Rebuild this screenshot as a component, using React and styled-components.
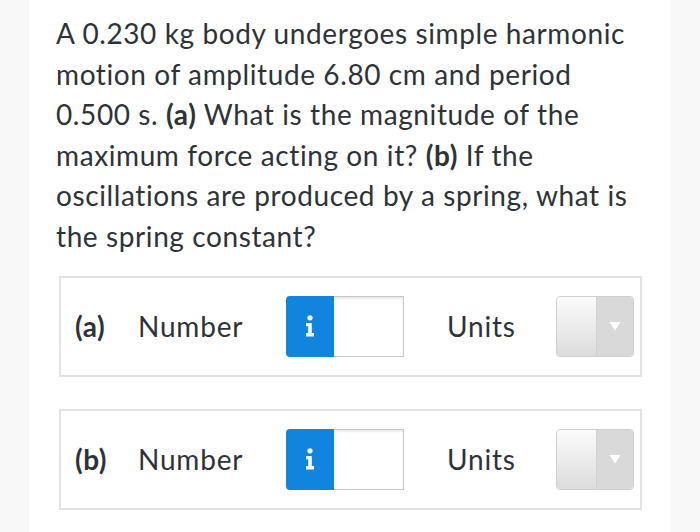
import React from 'react';
import styled, { createGlobalStyle } from 'styled-components';

const GlobalStyle = createGlobalStyle`
  html, body {
    margin: 0;
    padding: 0;
    background: #f8f8f8;
  }
  body {
    font-family: Lato, "Liberation Sans", sans-serif;
    color: #2e3338;
  }
`;

const Page = styled.div`
  display: flex;
  justify-content: flex-start;
  min-height: 532px;
`;

const Sheet = styled.main`
  width: 641px;
  margin-left: 29px;
  min-height: 532px;
  background: #ffffff;
  padding: 13px 0 0 27px;
  box-sizing: border-box;
`;

const Question = styled.p`
  margin: 0;
  font-size: 28px;
  line-height: 40.6px;
  letter-spacing: 0.6px;
  white-space: nowrap;

  b {
    font-weight: 700;
  }
`;

const Parts = styled.div`
  display: flex;
  flex-direction: column;
  gap: 32px;
  margin: 19px 0 0 3px;
`;

const PartBox = styled.section`
  display: flex;
  align-items: center;
  width: 583px;
  height: 101px;
  box-sizing: border-box;
  border: 2px solid #e2e2e2;
  padding: 0 6px 0 14px;
`;

const PartLabel = styled.span`
  width: 63px;
  font-size: 28px;
  font-weight: 700;
  letter-spacing: 0.5px;
  color: #2e3338;
`;

const FieldLabel = styled.span`
  width: ${({ $w }) => $w}px;
  margin-left: ${({ $gap }) => $gap || 0}px;
  font-size: 28px;
  letter-spacing: 0.8px;
  color: #2e3338;
`;

const InputGroup = styled.div`
  display: flex;
  height: 61px;
  width: 118px;
`;

const InfoTab = styled.div`
  width: 48px;
  background: #1185dd;
  border-radius: 4px 0 0 4px;
  display: flex;
  align-items: center;
  justify-content: center;
`;

const NumberInput = styled.div`
  flex: 1;
  background: #ffffff;
  border: 1px solid #c8c8c8;
  border-left: none;
  box-shadow: inset 0 2px 2px rgba(0, 0, 0, 0.08);
`;

const UnitSelect = styled.div`
  display: flex;
  margin-left: auto;
  width: 78px;
  height: 61px;
  border: 1px solid #cfcfcf;
  border-radius: 4px;
  overflow: hidden;
  box-sizing: border-box;
`;

const SelectValue = styled.div`
  width: 39px;
  background: linear-gradient(#fbfbfb, #dcdcdc);
  border-right: 1px solid #d0d0d0;
`;

const SelectArrow = styled.div`
  flex: 1;
  background: #d9d9d9;
  display: flex;
  align-items: center;
  justify-content: center;
`;

const InfoIcon = () => (
  <svg width="10" height="22" viewBox="0 0 10 22">
    <circle cx="5" cy="2.8" r="2.6" fill="#ffffff" />
    <path d="M1 8 H6.8 V18 H9 V21.5 H1 V18 H3.2 V11.3 H1 Z" fill="#ffffff" />
  </svg>
);

const Arrow = () => (
  <svg width="12" height="10" viewBox="0 0 12 10">
    <path d="M0.5 1 L11.5 1 L6 9.5 Z" fill="#ffffff" />
  </svg>
);

const Part = ({ label }) => (
  <PartBox>
    <PartLabel>{label}</PartLabel>
    <FieldLabel $w={148}>Number</FieldLabel>
    <InputGroup>
      <InfoTab>
        <InfoIcon />
      </InfoTab>
      <NumberInput />
    </InputGroup>
    <FieldLabel $w={109} $gap={43}>Units</FieldLabel>
    <UnitSelect>
      <SelectValue />
      <SelectArrow>
        <Arrow />
      </SelectArrow>
    </UnitSelect>
  </PartBox>
);

export default function App() {
  return (
    <>
      <GlobalStyle />
      <Page>
        <Sheet>
          <Question>
            A 0.230 kg body undergoes simple harmonic
            <br />
            motion of amplitude 6.80 cm and period
            <br />
            0.500 s. <b>(a)</b> What is the magnitude of the
            <br />
            maximum force acting on it? <b>(b)</b> If the
            <br />
            oscillations are produced by a spring, what is
            <br />
            the spring constant?
          </Question>
          <Parts>
            <Part label="(a)" />
            <Part label="(b)" />
          </Parts>
        </Sheet>
      </Page>
    </>
  );
}
